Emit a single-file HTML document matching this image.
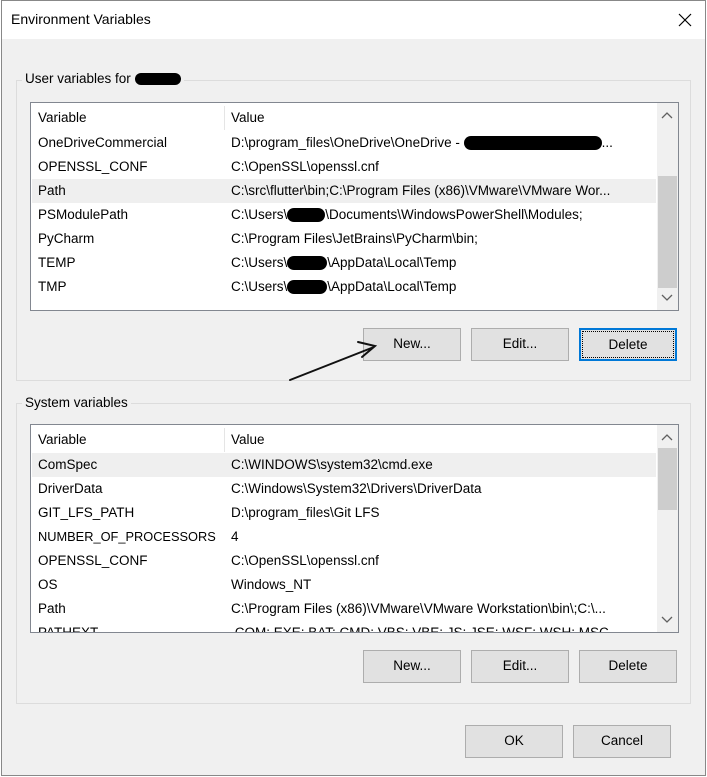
<!DOCTYPE html>
<html><head><style>
*{margin:0;padding:0;box-sizing:border-box}
body{width:707px;height:777px;background:#fff;font-family:"Liberation Sans",sans-serif;font-size:13px;color:#000;position:relative;overflow:hidden}
.a{position:absolute}
.win{left:1px;top:0;width:705px;height:776px;border:1px solid #888;background:#f0f0f0}
.title{left:2px;top:1px;width:703px;height:38px;background:#fff}
.grp{border:1px solid #dcdcdc}
.lbl{background:#f0f0f0;padding:0 3px;font-size:13.5px}
.list{background:#fff;border:1px solid #828790;overflow:hidden}
.row{position:absolute;left:1px;height:24px;line-height:24px;width:624px;white-space:nowrap;font-size:13.5px}
.row>span{position:absolute}
.c1{left:6px}.c2{left:199px}
.btn{background:#e1e1e1;border:1px solid #adadad;text-align:center;line-height:30px;font-size:13.5px}
.sb{background:#f0f0f0}
.thumb{background:#cdcdcd}
.blk{background:#000;border-radius:8px;display:inline-block;height:14px;vertical-align:middle}
</style></head><body>
<div class="a win"></div>
<div class="a title"></div>
<div class="a" style="left:11px;top:11px;font-size:14px">Environment Variables</div>
<svg class="a" style="left:678px;top:13px" width="14" height="14"><path d="M1 1L13 13M13 1L1 13" stroke="#000" stroke-width="1.2"/></svg>

<div class="a grp" style="left:16px;top:80px;width:675px;height:301px"></div>
<div class="a lbl" style="left:22px;top:71px">User variables for <span class="blk" style="width:46px;height:12px"></span></div>
<div class="a list" style="left:30px;top:102px;width:649px;height:209px">
 <div class="row" style="top:3px"><span class="c1">Variable</span><span class="c2">Value</span></div>
 <div class="a" style="left:193px;top:3px;width:1px;height:24px;background:#e5e5e5"></div>
 <div class="row" style="top:28px"><span class="c1">OneDriveCommercial</span><span class="c2">D:\program_files\OneDrive\OneDrive - <span class="blk" style="width:138px"></span>...</span></div>
 <div class="row" style="top:52px"><span class="c1">OPENSSL_CONF</span><span class="c2">C:\OpenSSL\openssl.cnf</span></div>
 <div class="row" style="top:76px;background:#efefef"><span class="c1">Path</span><span class="c2">C:\src\flutter\bin;C:\Program Files (x86)\VMware\VMware Wor...</span></div>
 <div class="row" style="top:100px"><span class="c1">PSModulePath</span><span class="c2">C:\Users\<span class="blk" style="width:38px"></span>\Documents\WindowsPowerShell\Modules;</span></div>
 <div class="row" style="top:124px"><span class="c1">PyCharm</span><span class="c2">C:\Program Files\JetBrains\PyCharm\bin;</span></div>
 <div class="row" style="top:148px"><span class="c1">TEMP</span><span class="c2">C:\Users\<span class="blk" style="width:40px"></span>\AppData\Local\Temp</span></div>
 <div class="row" style="top:172px"><span class="c1">TMP</span><span class="c2">C:\Users\<span class="blk" style="width:40px"></span>\AppData\Local\Temp</span></div>
 <div class="a sb" style="left:626px;top:0;width:21px;height:207px"></div>
 <div class="a thumb" style="left:627px;top:73px;width:19px;height:112px"></div>
 <svg class="a" style="left:630px;top:9px" width="12" height="8"><path d="M1 6L6 1L11 6" fill="none" stroke="#606060" stroke-width="1.3"/></svg>
 <svg class="a" style="left:630px;top:191px" width="12" height="8"><path d="M1 1L6 6L11 1" fill="none" stroke="#606060" stroke-width="1.3"/></svg>
</div>
<div class="a btn" style="left:363px;top:328px;width:98px;height:33px">New...</div>
<div class="a btn" style="left:471px;top:328px;width:98px;height:33px">Edit...</div>
<div class="a btn" style="left:579px;top:328px;width:98px;height:33px;border:2px solid #0078d7;line-height:29px"><div style="position:absolute;left:1px;top:1px;right:1px;bottom:1px;border:1px dotted #000"></div>Delete</div>
<svg class="a" style="left:0;top:0" width="707" height="777"><path d="M290 380L374 347M358 342L375 346L362 357" fill="none" stroke="#111" stroke-width="2" stroke-linecap="round"/></svg>

<div class="a grp" style="left:16px;top:403px;width:675px;height:301px"></div>
<div class="a lbl" style="left:22px;top:395px">System variables</div>
<div class="a list" style="left:30px;top:424px;width:649px;height:209px">
 <div class="row" style="top:3px"><span class="c1">Variable</span><span class="c2">Value</span></div>
 <div class="a" style="left:193px;top:3px;width:1px;height:24px;background:#e5e5e5"></div>
 <div class="row" style="top:28px;background:#efefef"><span class="c1">ComSpec</span><span class="c2">C:\WINDOWS\system32\cmd.exe</span></div>
 <div class="row" style="top:52px"><span class="c1">DriverData</span><span class="c2">C:\Windows\System32\Drivers\DriverData</span></div>
 <div class="row" style="top:76px"><span class="c1">GIT_LFS_PATH</span><span class="c2">D:\program_files\Git LFS</span></div>
 <div class="row" style="top:100px"><span class="c1" style="font-size:12.8px">NUMBER_OF_PROCESSORS</span><span class="c2">4</span></div>
 <div class="row" style="top:124px"><span class="c1">OPENSSL_CONF</span><span class="c2">C:\OpenSSL\openssl.cnf</span></div>
 <div class="row" style="top:148px"><span class="c1">OS</span><span class="c2">Windows_NT</span></div>
 <div class="row" style="top:172px"><span class="c1">Path</span><span class="c2">C:\Program Files (x86)\VMware\VMware Workstation\bin\;C:\...</span></div>
 <div class="row" style="top:196px"><span class="c1">PATHEXT</span><span class="c2">.COM;.EXE;.BAT;.CMD;.VBS;.VBE;.JS;.JSE;.WSF;.WSH;.MSC</span></div>
 <div class="a sb" style="left:626px;top:0;width:21px;height:207px"></div>
 <div class="a thumb" style="left:627px;top:23px;width:19px;height:62px"></div>
 <svg class="a" style="left:630px;top:9px" width="12" height="8"><path d="M1 6L6 1L11 6" fill="none" stroke="#606060" stroke-width="1.3"/></svg>
 <svg class="a" style="left:630px;top:191px" width="12" height="8"><path d="M1 1L6 6L11 1" fill="none" stroke="#606060" stroke-width="1.3"/></svg>
</div>
<div class="a btn" style="left:363px;top:650px;width:98px;height:33px">New...</div>
<div class="a btn" style="left:471px;top:650px;width:98px;height:33px">Edit...</div>
<div class="a btn" style="left:579px;top:650px;width:98px;height:33px">Delete</div>

<div class="a btn" style="left:465px;top:725px;width:98px;height:33px">OK</div>
<div class="a btn" style="left:573px;top:725px;width:98px;height:33px">Cancel</div>
</body></html>
